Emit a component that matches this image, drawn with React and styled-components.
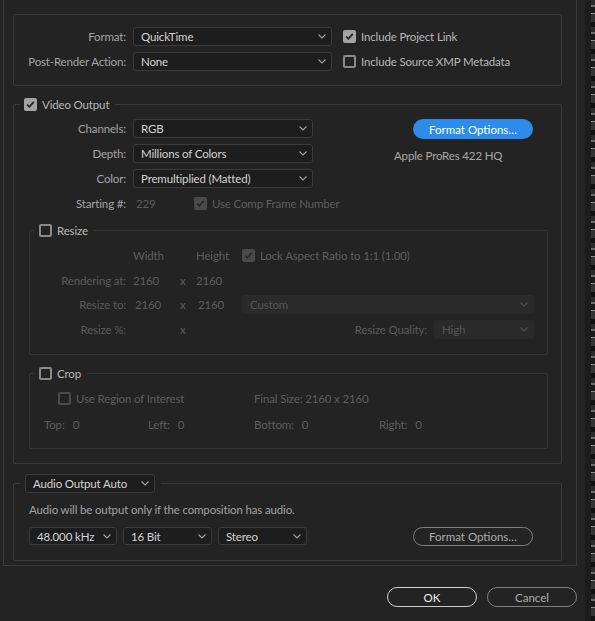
import React from "react";
import styled, { createGlobalStyle } from "styled-components";

const GlobalStyle = createGlobalStyle`
  html, body {
    margin: 0;
    padding: 0;
    background: #232323;
  }
  body {
    font-family: Lato, "Open Sans", sans-serif;
    font-size: 11.5px;
    letter-spacing: -0.15px;
    color: #b4b4b4;
  }
`;

const Screen = styled.div`
  display: flex;
  width: 595px;
  height: 621px;
  background: #232323;
  overflow: hidden;
`;

const Dialog = styled.div`
  width: 585px;
  padding-left: 3px;
  box-sizing: border-box;
  display: flex;
  flex-direction: column;
`;

const Backdrop = styled.div`
  flex: 1;
  display: flex;
  justify-content: flex-end;
  background: #1c1c1c;
`;

const Footage = styled.div`
  width: 4px;
  background: repeating-linear-gradient(
    180deg,
    #2b2b2b 0 5px,
    #6a6a6a 5px 7px,
    #1a1a1a 7px 13px,
    #8c8c8c 13px 14px,
    #333 14px 22px,
    #111 22px 27px
  );
`;

const Panel = styled.div`
  width: 574px;
  box-sizing: border-box;
  border: 1px solid #3a3a3a;
  border-top: none;
  padding: 14px 14px 4px 9px;
`;

const TopBox = styled.div`
  border: 1px solid #3a3a3a;
  border-radius: 2px;
  padding: 12px 0 14px;
  display: grid;
  grid-template-columns: 119px 199px auto;
  grid-auto-rows: 19px;
  row-gap: 6px;
  align-items: center;
`;

const Group = styled.fieldset`
  margin: ${p => p.$margin || 0};
  padding: 0;
  border: 1px solid ${p => (p.$inner ? "#353535" : "#3a3a3a")};
  border-radius: 2px;
  min-width: 0;
`;

const Legend = styled.legend`
  margin-left: ${p => p.$offset}px;
  padding: ${p => p.$pad};
  height: ${p => p.$h || 13}px;
  display: flex;
  align-items: center;
  gap: 5px;
  line-height: 13px;
  color: #b8b8b8;
`;

const Label = styled.span`
  text-align: right;
  padding-right: 7px;
  white-space: nowrap;
  color: ${p => (p.$dim ? "#5c5c5c" : "#a4a4a4")};
`;

const Value = styled.span`
  white-space: nowrap;
  color: #5e5e5e;
  padding-left: ${p => p.$inset || 0}px;
  width: ${p => (p.$w ? p.$w + "px" : "auto")};
  flex: none;
`;

const Select = styled.div`
  display: flex;
  align-items: center;
  justify-content: space-between;
  box-sizing: border-box;
  width: ${p => (p.$w ? p.$w + "px" : "100%")};
  height: ${p => p.$h || 19}px;
  padding: 0 5px 0 7px;
  background: ${p => (p.$disabled ? "#2a2a2a" : "#1d1d1d")};
  border: 1px solid ${p => (p.$disabled ? "#2a2a2a" : "#3b3b3b")};
  border-radius: 3px;
  color: ${p => (p.$disabled ? "#555555" : "#d4d4d4")};
  white-space: nowrap;
  flex: none;
  svg {
    stroke: ${p => (p.$disabled ? "#505050" : "#a0a0a0")};
  }
`;

const Box = styled.span`
  width: 13px;
  height: 13px;
  box-sizing: border-box;
  border-radius: 2px;
  flex: none;
  display: inline-flex;
  align-items: center;
  justify-content: center;
  border: 2px solid ${p => (p.$disabled ? "#4a4a4a" : p.$checked ? "#a3a3a3" : "#8a8a8a")};
  background: ${p => (p.$checked ? (p.$disabled ? "#4a4a4a" : "#a3a3a3") : "transparent")};
  svg {
    stroke: ${p => (p.$disabled ? "#2b2b2b" : "#262626")};
  }
`;

const CheckRow = styled.span`
  display: flex;
  align-items: center;
  gap: 5px;
  white-space: nowrap;
  padding-left: ${p => p.$inset || 0}px;
  color: ${p => (p.$disabled ? "#5e5e5e" : "#b8b8b8")};
  grid-column: ${p => p.$span || "auto"};
`;

const VideoBody = styled.div`
  padding: 8px 0 14px;
  display: flex;
  flex-direction: column;
`;

const VideoTop = styled.div`
  display: flex;
`;

const SettingsGrid = styled.div`
  display: grid;
  grid-template-columns: 119px 180px;
  grid-auto-rows: 19px;
  row-gap: 6px;
  align-items: center;
`;

const StartCell = styled.div`
  display: flex;
  align-items: center;
`;

const Side = styled.div`
  margin-left: 81px;
  display: flex;
  flex-direction: column;
`;

const CodecNote = styled.span`
  margin-top: 9px;
  line-height: 15px;
  color: #a8a8a8;
`;

const ResizeGrid = styled.div`
  display: grid;
  grid-template-columns: 103px 47px 16px 46px 1fr;
  grid-auto-rows: 19px;
  row-gap: 5.5px;
  align-items: center;
  padding: 9px 13px 15px 0;
  color: #5e5e5e;
`;

const QualityCell = styled.div`
  display: flex;
  justify-content: flex-end;
  align-items: center;
`;

const CropGrid = styled.div`
  display: grid;
  grid-template-columns: 104px 106px 125px 1fr;
  grid-auto-rows: 19px;
  row-gap: 7px;
  align-items: center;
  padding: 9px 0 14.5px 14px;
  color: #5e5e5e;
  white-space: nowrap;
`;

const Side2 = styled.span`
  display: flex;
  gap: 8px;
`;

const AudioBody = styled.div`
  padding: 9px 0 14px 15px;
`;

const Note = styled.div`
  line-height: 16px;
  color: #a2a2a2;
`;

const AudioRow = styled.div`
  display: flex;
  align-items: flex-start;
  gap: 6px;
  margin-top: 9px;
`;

const Pill = styled.button`
  box-sizing: border-box;
  width: ${p => p.$w || 90}px;
  height: ${p => p.$h || 20}px;
  margin-left: ${p => p.$push || 0}px;
  border-radius: 10px;
  font: inherit;
  padding: 0;
  cursor: default;
  background: ${p => (p.$variant === "primary" ? "#2d8ceb" : "transparent")};
  border: ${p =>
    p.$variant === "primary"
      ? "none"
      : `1.5px solid ${p.$variant === "strong" ? "#cfcfcf" : "#7e7e7e"}`};
  color: ${p =>
    p.$variant === "primary" ? "#ffffff" : p.$variant === "strong" ? "#f0f0f0" : "#adadad"};
`;

const Footer = styled.div`
  width: 574px;
  display: flex;
  justify-content: flex-end;
  gap: 10px;
  padding-top: 21px;
`;

const Chevron = () => (
  <svg width="8" height="5" viewBox="0 0 8 5" fill="none" strokeWidth="1.1">
    <polyline points="0.5,0.5 4,4 7.5,0.5" />
  </svg>
);

const Dropdown = ({ children, ...rest }) => (
  <Select {...rest}>
    <span>{children}</span>
    <Chevron />
  </Select>
);

const Checkbox = ({ checked, disabled }) => (
  <Box $checked={checked} $disabled={disabled}>
    {checked && (
      <svg width="9" height="9" viewBox="0 0 9 9" fill="none" strokeWidth="1.8">
        <polyline points="1.2,4.6 3.4,6.8 7.8,1.8" />
      </svg>
    )}
  </Box>
);

export default function App() {
  return (
    <Screen>
      <GlobalStyle />
      <Dialog>
        <Panel>
          <TopBox>
            <Label>Format:</Label>
            <Dropdown>QuickTime</Dropdown>
            <CheckRow $inset={11}>
              <Checkbox checked />
              Include Project Link
            </CheckRow>
            <Label>Post-Render Action:</Label>
            <Dropdown>None</Dropdown>
            <CheckRow $inset={11}>
              <Checkbox />
              Include Source XMP Metadata
            </CheckRow>
          </TopBox>

          <Group $margin="12px 0 0">
            <Legend $offset={6} $pad="0 6px 0 4px">
              <Checkbox checked />
              Video Output
            </Legend>
            <VideoBody>
              <VideoTop>
                <SettingsGrid>
                  <Label>Channels:</Label>
                  <Dropdown>RGB</Dropdown>
                  <Label>Depth:</Label>
                  <Dropdown>Millions of Colors</Dropdown>
                  <Label>Color:</Label>
                  <Dropdown>Premultiplied (Matted)</Dropdown>
                  <Label>Starting #:</Label>
                  <StartCell>
                    <Value $inset={3} $w={58}>229</Value>
                    <CheckRow $disabled>
                      <Checkbox checked disabled />
                      Use Comp Frame Number
                    </CheckRow>
                  </StartCell>
                </SettingsGrid>
                <Side>
                  <Pill $variant="primary" $w={120} $push={19}>
                    Format Options…
                  </Pill>
                  <CodecNote>Apple ProRes 422 HQ</CodecNote>
                </Side>
              </VideoTop>

              <Group $inner $margin="11px 13px 0 15px">
                <Legend $offset={4} $pad="0 6px 0 5px">
                  <Checkbox />
                  Resize
                </Legend>
                <ResizeGrid>
                  <span />
                  <Value>Width</Value>
                  <span />
                  <Value>Height</Value>
                  <CheckRow $disabled>
                    <Checkbox checked disabled />
                    Lock Aspect Ratio to 1:1 (1.00)
                  </CheckRow>

                  <Label $dim>Rendering at:</Label>
                  <Value>2160</Value>
                  <Value>x</Value>
                  <Value>2160</Value>
                  <span />

                  <Label $dim>Resize to:</Label>
                  <Value $inset={2}>2160</Value>
                  <Value>x</Value>
                  <Value $inset={2}>2160</Value>
                  <Dropdown $disabled>Custom</Dropdown>

                  <Label $dim>Resize %:</Label>
                  <span />
                  <Value>x</Value>
                  <span />
                  <QualityCell>
                    <Label $dim>Resize Quality:</Label>
                    <Dropdown $disabled $w={100}>High</Dropdown>
                  </QualityCell>
                </ResizeGrid>
              </Group>

              <Group $inner $margin="12px 13px 0 15px">
                <Legend $offset={4} $pad="0 6px 0 5px">
                  <Checkbox />
                  Crop
                </Legend>
                <CropGrid>
                  <CheckRow $disabled $inset={14} $span="1 / span 2">
                    <Checkbox disabled />
                    Use Region of Interest
                  </CheckRow>
                  <span>Final Size: 2160 x 2160</span>
                  <span />

                  <Side2>Top:<span>0</span></Side2>
                  <Side2>Left:<span>0</span></Side2>
                  <Side2>Bottom:<span>0</span></Side2>
                  <Side2>Right:<span>0</span></Side2>
                </CropGrid>
              </Group>
            </VideoBody>
          </Group>

          <Group $margin="10px 0 0">
            <Legend $offset={6} $pad="0 6px 0 5px" $h={19}>
              <Dropdown $w={130}>Audio Output Auto</Dropdown>
            </Legend>
            <AudioBody>
              <Note>Audio will be output only if the composition has audio.</Note>
              <AudioRow>
                <Dropdown $w={88} $h={18}>48.000 kHz</Dropdown>
                <Dropdown $w={89} $h={18}>16 Bit</Dropdown>
                <Dropdown $w={89} $h={18}>Stereo</Dropdown>
                <Pill $w={120} $h={19} $push={100}>Format Options…</Pill>
              </AudioRow>
            </AudioBody>
          </Group>
        </Panel>
        <Footer>
          <Pill $variant="strong">OK</Pill>
          <Pill>Cancel</Pill>
        </Footer>
      </Dialog>
      <Backdrop>
        <Footage />
      </Backdrop>
    </Screen>
  );
}
